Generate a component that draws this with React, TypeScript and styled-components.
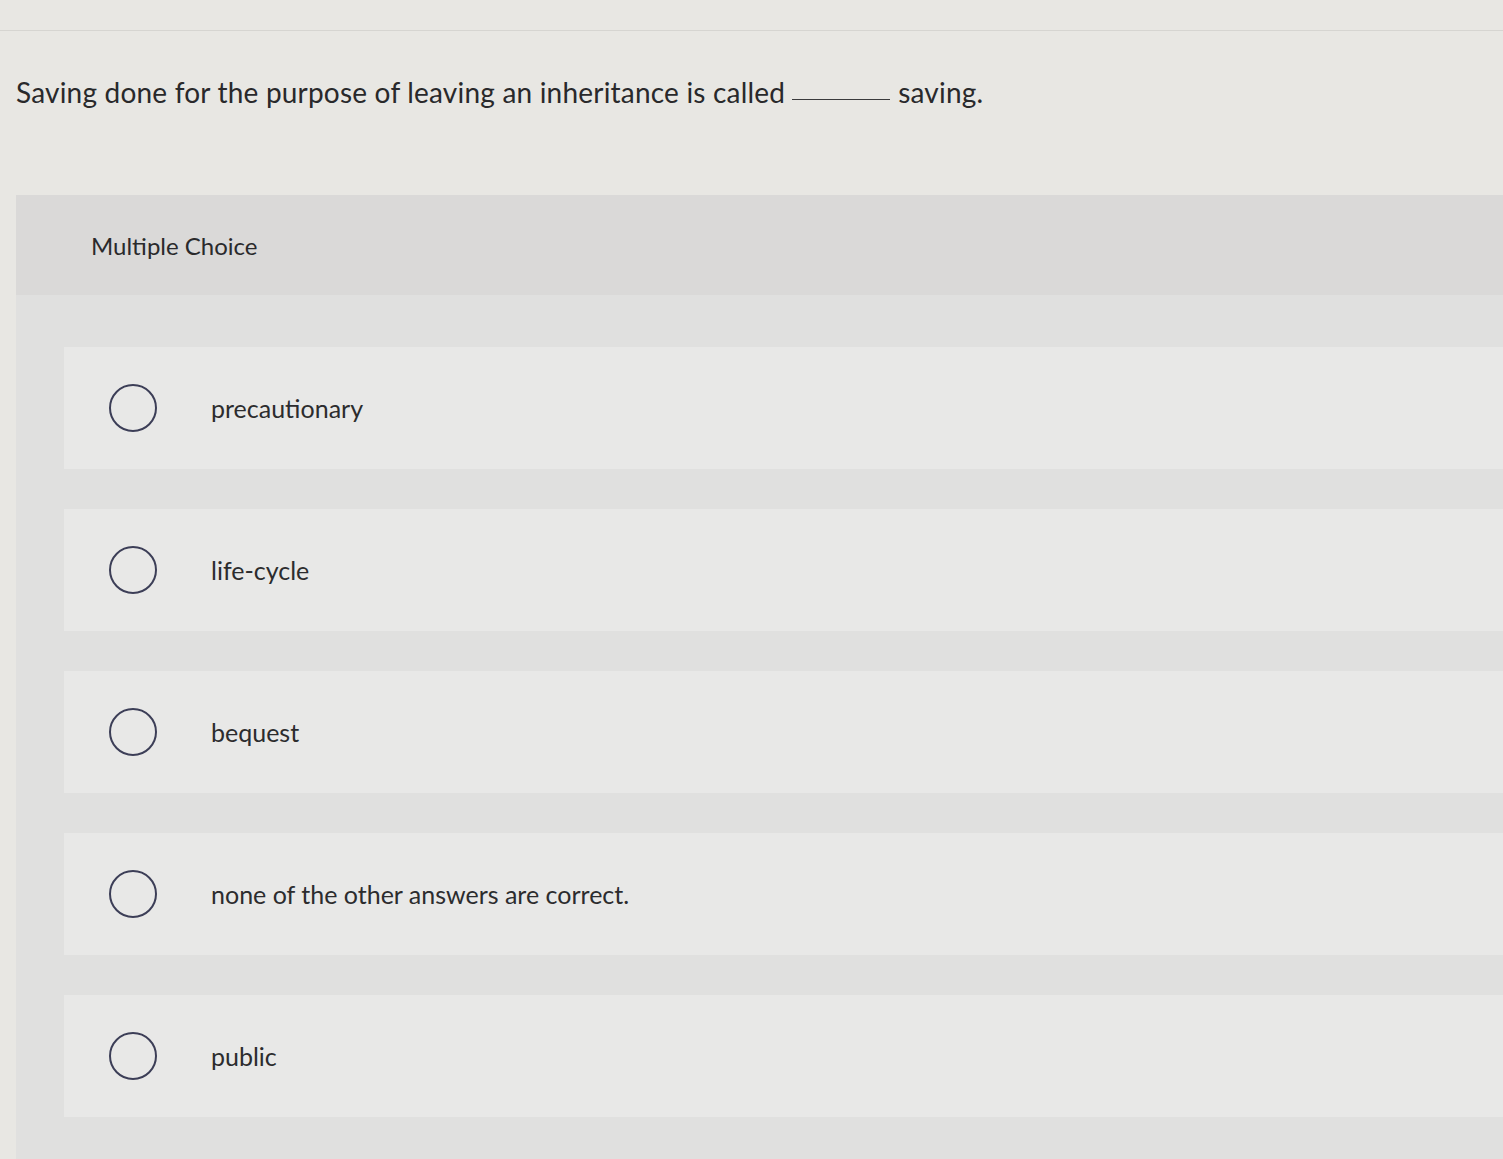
import React from 'react';
import styled, { createGlobalStyle } from 'styled-components';

const GlobalStyle = createGlobalStyle`
  html, body {
    margin: 0;
    padding: 0;
    background: #e8e7e3;
  }
  body {
    font-family: Lato, 'Open Sans', sans-serif;
    color: #2a2a2c;
  }
`;

// #region -- Styled components
const Page = styled.main`
  min-height: 1159px;
  overflow: hidden;
`;

const TopRule = styled.div`
  height: 30px;
  border-bottom: 1px solid #d6d5d1;
`;

const Prompt = styled.p`
  margin: 0;
  padding: 43px 0 0 16px;
  height: 125px;
  box-sizing: border-box;
  font-size: 28px;
  line-height: 36px;
  letter-spacing: 0.2px;
  color: #29292b;
`;

const Blank = styled.span`
  display: inline-block;
  width: 98px;
  margin: 0 8px 0 7px;
  border-bottom: 1.5px solid #3a3a3c;
  vertical-align: 3px;
`;

const Panel = styled.section`
  margin: 39px 0 0 16px;
  background: #e0e0df;
  padding-bottom: 44px;
`;

const PanelHeader = styled.header`
  height: 100px;
  display: flex;
  align-items: center;
  padding: 0 0 0 75px;
  background: #dad9d8;
  font-size: 24px;
  color: #2a2a2c;
`;

const OptionList = styled.ul`
  list-style: none;
  margin: 0;
  padding: 52px 0 0 48px;
  display: flex;
  flex-direction: column;
  gap: 40px;
`;

const Option = styled.li`
  height: 122px;
  display: flex;
  align-items: center;
  gap: 54px;
  padding-left: 45px;
  background: #e8e8e7;
  font-size: 25px;
  color: #2c2c2e;
  cursor: pointer;
`;

const Radio = styled.span`
  flex: none;
  width: 44px;
  height: 44px;
  border: 2px solid #3c3e57;
  border-radius: 50%;
`;
// #endregion

const choices = [
  'precautionary',
  'life-cycle',
  'bequest',
  'none of the other answers are correct.',
  'public',
];

function App() {
  return (
    <Page>
      <GlobalStyle />
      <TopRule />
      <Prompt>
        Saving done for the purpose of leaving an inheritance is called
        <Blank />
        saving.
      </Prompt>
      <Panel>
        <PanelHeader>Multiple Choice</PanelHeader>
        <OptionList>
          {choices.map((c) => (
            <Option key={c}>
              <Radio />
              {c}
            </Option>
          ))}
        </OptionList>
      </Panel>
    </Page>
  );
}

export default App;
